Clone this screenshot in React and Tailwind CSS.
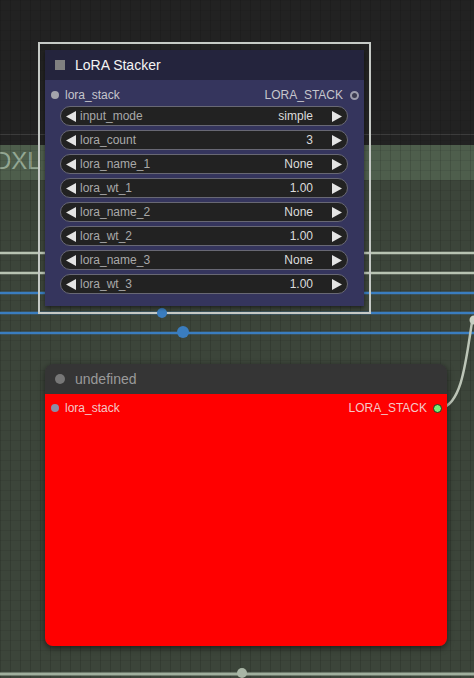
import React from "react";

const widgets = [
  ["input_mode", "simple"],
  ["lora_count", "3"],
  ["lora_name_1", "None"],
  ["lora_wt_1", "1.00"],
  ["lora_name_2", "None"],
  ["lora_wt_2", "1.00"],
  ["lora_name_3", "None"],
  ["lora_wt_3", "1.00"],
];

function LeftArrow() {
  return (
    <svg width="10" height="11" viewBox="0 0 10 11" className="shrink-0">
      <polygon points="10,0 10,11 0,5.5" fill="#e4e4e4" />
    </svg>
  );
}

function RightArrow() {
  return (
    <svg width="10" height="11" viewBox="0 0 10 11" className="shrink-0">
      <polygon points="0,0 0,11 10,5.5" fill="#e4e4e4" />
    </svg>
  );
}

function Widget({ label, value }) {
  return (
    <div className="flex h-5 items-center rounded-full border border-[#686874] bg-[#222222] pl-[5px] pr-[5px] text-[12px] leading-none">
      <LeftArrow />
      <span className="ml-[4px] text-[#a9a9a9]">{label}</span>
      <span className="ml-auto text-[#dcdcdc]">{value}</span>
      <span className="ml-[19px]">
        <RightArrow />
      </span>
    </div>
  );
}

export default function App() {
  return (
    <div className="relative h-[678px] w-[474px] overflow-hidden bg-[#222222] font-['Liberation_Sans',Arial,sans-serif]">
      {/* faint top separator */}
      <div className="absolute left-0 right-0 top-[134px] h-px bg-[#3c3c3c]" />

      {/* group */}
      <div className="absolute left-0 right-0 top-[145px] bottom-0 flex flex-col">
        <div className="h-[35px] shrink-0 bg-[#4e5e4c] pt-[4px]">
          <span className="ml-[-22px] block text-[24px] leading-none text-[#93a793]">SDXL</span>
        </div>
        <div className="flex-1 bg-[#3c453a]" />
      </div>

      {/* grid overlay */}
      <div className="pointer-events-none absolute inset-0 bg-[linear-gradient(to_right,rgba(0,0,0,0.13)_1px,transparent_1px),linear-gradient(to_bottom,rgba(0,0,0,0.07)_1px,transparent_1px)] bg-[size:10px_10px]" />

      {/* wires */}
      <svg className="absolute inset-0" width="474" height="678" viewBox="0 0 474 678">
        <line x1="0" y1="253" x2="474" y2="253" stroke="#b8c3b2" strokeWidth="2.5" />
        <line x1="0" y1="273" x2="474" y2="273" stroke="#b8c3b2" strokeWidth="2.5" />
        <line x1="0" y1="293" x2="474" y2="293" stroke="#3a7dbf" strokeWidth="2.5" />
        <line x1="0" y1="313" x2="474" y2="313" stroke="#3a7dbf" strokeWidth="2.5" />
        <line x1="0" y1="333" x2="474" y2="333" stroke="#3a7dbf" strokeWidth="2.5" />
        <path d="M 441 408 C 462 404, 466 360, 472 322" fill="none" stroke="#bcc5b7" strokeWidth="2.5" />
        <circle cx="474" cy="320" r="4.5" fill="#c8d0c3" />
        <line x1="0" y1="674" x2="474" y2="674" stroke="#a0ae9d" strokeWidth="3" />
        <circle cx="242" cy="673" r="5" fill="#a9b6a6" />
      </svg>

      {/* selection outline */}
      <div className="absolute left-[38px] top-[42px] h-[272px] w-[333px] border-2 border-[#c6cac6]" />

      {/* blue reroute dots */}
      <svg className="absolute inset-0" width="474" height="678" viewBox="0 0 474 678">
        <circle cx="162" cy="313" r="5" fill="#3a7dbf" />
        <circle cx="183" cy="332" r="6" fill="#3a7dbf" />
      </svg>

      {/* LoRA Stacker node */}
      <div className="absolute left-[45px] top-[50px] flex w-[319px] flex-col shadow-[0_2px_4px_rgba(0,0,0,0.5)]">
        <div className="flex h-[30px] items-center bg-[#24243d] pl-[10px]">
          <div className="h-[10px] w-[10px] bg-[#808080]" />
          <span className="ml-[10px] text-[14px] leading-none text-[#f4f4f4]">LoRA Stacker</span>
        </div>
        <div className="flex flex-col bg-[#35355d] pb-[12px] pl-[15px] pr-[16px] pt-[5px]">
          <div className="ml-[-9px] mr-[-10.5px] flex h-5 items-center text-[12px] leading-none">
            <div className="h-[8px] w-[8px] rounded-full bg-[#a4a4ac]" />
            <span className="ml-[6px] text-[#c6c6cc]">lora_stack</span>
            <span className="ml-auto text-[#c6c6cc]">LORA_STACK</span>
            <div className="ml-[6.5px] h-[9px] w-[9px] rounded-full border-2 border-[#9c9cac] bg-[#3a3a50]" />
          </div>
          <div className="mt-[1px] flex flex-col gap-1">
            {widgets.map(([l, v]) => (
              <Widget key={l} label={l} value={v} />
            ))}
          </div>
        </div>
      </div>

      {/* undefined node */}
      <div className="absolute left-[45px] top-[364px] flex w-[402px] flex-col rounded-[8px] shadow-[0_2px_6px_rgba(0,0,0,0.55)]">
        <div className="flex h-[30px] items-center rounded-t-[8px] bg-[#353535] pl-[10px]">
          <div className="h-[10px] w-[10px] rounded-full bg-[#777777]" />
          <span className="ml-[10px] text-[14px] leading-none text-[#9a9a9a]">undefined</span>
        </div>
        <div className="h-[252px] rounded-b-[8px] bg-[#ff0000] pl-[6px] pr-[5.5px] pt-[4px]">
          <div className="flex h-5 items-center text-[12px] leading-none">
            <div className="h-[8px] w-[8px] rounded-full bg-[#8c8ca6]" />
            <span className="ml-[6px] text-[#f4c8c8]">lora_stack</span>
            <span className="ml-auto text-[#f4c8c8]">LORA_STACK</span>
            <div className="ml-[5.5px] h-[9px] w-[9px] rounded-full border border-[#1f3a1f] bg-[#77ee77]" />
          </div>
        </div>
      </div>
    </div>
  );
}
